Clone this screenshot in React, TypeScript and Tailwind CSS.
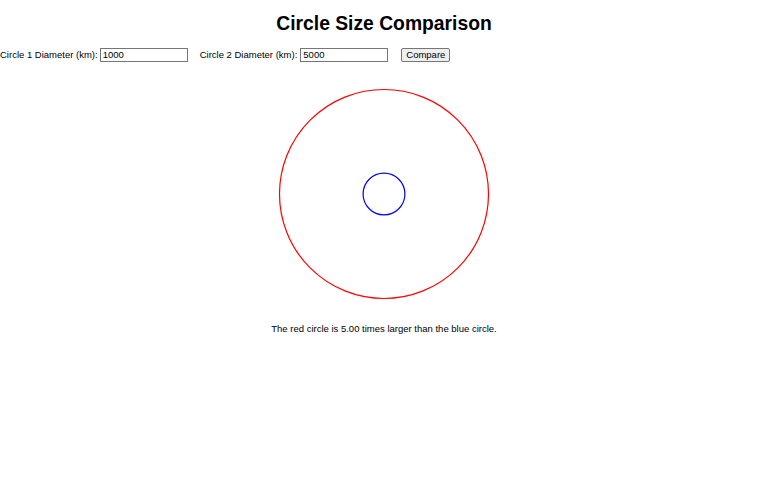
import { useState } from "react";

export default function App() {
  const [d1, setD1] = useState("1000");
  const [d2, setD2] = useState("5000");
  const [result, setResult] = useState({ a: 1000, b: 5000 });

  const big = Math.max(result.a, result.b);
  const small = Math.min(result.a, result.b);
  const maxR = 104.5;
  const smallR = big > 0 ? (small / big) * maxR : 0;
  const ratio = small > 0 ? (big / small).toFixed(2) : "0.00";

  const compare = () => {
    setResult({ a: parseFloat(d1) || 0, b: parseFloat(d2) || 0 });
  };

  return (
    <div className="min-h-screen bg-white text-black font-['Liberation_Sans',Arial,sans-serif]">
      <h1 className="pt-3 text-center text-[19.3px] font-bold leading-6">
        Circle Size Comparison
      </h1>

      <div className="mt-3 flex h-[14px] items-center text-[9.5px]">
        <label>Circle 1 Diameter (km):</label>
        <input
          type="number"
          value={d1}
          onChange={(e) => setD1(e.target.value)}
          className="ml-[2px] h-[14px] w-[88px] border border-[#767676] px-[2px] text-[9.5px] outline-none [appearance:textfield]"
        />
        <label className="ml-3">Circle 2 Diameter (km):</label>
        <input
          type="number"
          value={d2}
          onChange={(e) => setD2(e.target.value)}
          className="ml-[3px] h-[14px] w-[88px] border border-[#767676] px-[2px] text-[9.5px] outline-none [appearance:textfield]"
        />
        <button
          onClick={compare}
          className="ml-[13px] h-[14px] w-[49px] rounded-[2px] border border-[#767676] bg-[#efefef] text-[9.5px] leading-none"
        >
          Compare
        </button>
      </div>

      <div className="mt-[22px] flex justify-center">
        <svg width="220" height="220" viewBox="0 0 220 220">
          <circle cx="110" cy="110" r={maxR} fill="none" stroke="#ff0000" strokeWidth="1.2" />
          <circle cx="110" cy="110" r={smallR} fill="none" stroke="#0000ff" strokeWidth="1.2" />
        </svg>
      </div>

      <p className="mt-[19px] text-center text-[9.5px] leading-3">
        The red circle is {ratio} times larger than the blue circle.
      </p>
    </div>
  );
}
